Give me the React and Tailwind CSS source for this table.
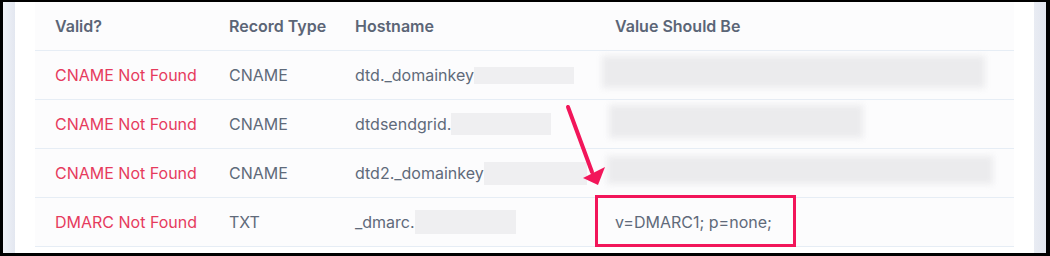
import React from "react";

const rows = [
  { status: "CNAME Not Found", type: "CNAME", host: "dtd._domainkey", hostMask: [100, 17], value: { w: 383, h: 32, dx: -13 } },
  { status: "CNAME Not Found", type: "CNAME", host: "dtdsendgrid.", hostMask: [100, 22], value: { w: 254, h: 33, dx: -6 } },
  { status: "CNAME Not Found", type: "CNAME", host: "dtd2._domainkey", hostMask: [103, 23], value: { w: 386, h: 28, dx: -8 } },
  { status: "DMARC Not Found", type: "TXT", host: "_dmarc.", hostMask: [101, 24], text: "v=DMARC1; p=none;" },
];

function Mask({ w, h, soft }) {
  return (
    <span
      className={
        "inline-block " +
        (soft ? "bg-[#ebebed] blur-[3px]" : "bg-[#efeff1] blur-[0.5px]")
      }
      style={{ width: w, height: h }}
    />
  );
}

export default function App() {
  return (
    <div
      className="w-[1050px] h-[256px] bg-black pt-[2px] pl-[3px] pr-[4px] pb-[3px] flex"
      style={{ fontFamily: "Inter, 'Noto Sans', sans-serif" }}
    >
      <div className="w-[12px] bg-gradient-to-r from-[#f1f3f8] to-[#e3e7f0]" />
      <div className="flex-1 bg-white px-[20px] relative">
        <div className="bg-[#fcfcfd] text-[16px]">
          {/* header */}
          <div className="flex h-[49px] items-center border-b border-[#e6edf5] text-[#5b6576] font-semibold">
            <div className="w-[194px] pl-[20px]">Valid?</div>
            <div className="w-[126px]">Record Type</div>
            <div className="w-[260px]">Hostname</div>
            <div className="flex-1">Value Should Be</div>
          </div>
          {rows.map((r, i) => (
            <div
              key={i}
              className="flex h-[49px] items-center border-b border-[#e6edf5] text-[#5f6a7a]"
            >
              <div className="w-[194px] pl-[20px] text-[#e63b5d]">{r.status}</div>
              <div className="w-[126px]">{r.type}</div>
              <div className="w-[260px] flex items-center">
                <span>{r.host}</span>
                <Mask w={r.hostMask[0]} h={r.hostMask[1]} />
              </div>
              <div className="flex-1 flex items-center relative h-full">
                {r.value ? (
                  <span className="relative" style={{ left: r.value.dx }}>
                    <Mask w={r.value.w} h={r.value.h} soft />
                  </span>
                ) : (
                  <>
                    <span>{r.text}</span>
                    <span className="absolute left-[-20px] top-[-3px] w-[201px] h-[52px] border-[3px] border-[#f2165a]" />
                  </>
                )}
              </div>
            </div>
          ))}
        </div>
        {/* pointer arrow */}
        <svg
          className="absolute left-[530px] top-[98px]"
          width="60"
          height="92"
          viewBox="0 0 60 92"
        >
          <line x1="23" y1="7" x2="47" y2="72" stroke="#f2165a" strokeWidth="4" strokeLinecap="round" />
          <polygon points="53,85 38,78 60,67" fill="#f2165a" />
        </svg>
      </div>
      <div className="w-[12px] bg-gradient-to-r from-[#e9ecf3] to-[#e2e6ef]" />
    </div>
  );
}
